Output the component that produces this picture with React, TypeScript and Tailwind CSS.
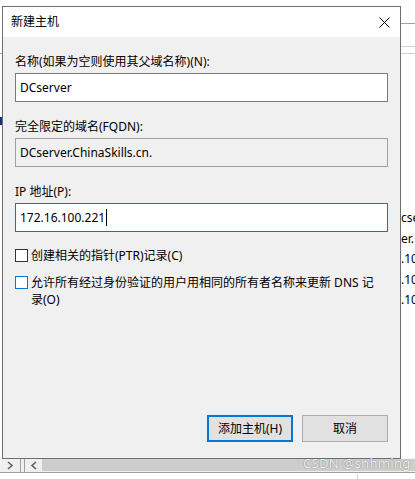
import React from "react";

const font = "font-['Noto_Sans','Noto_Sans_CJK_SC',sans-serif]";

const Field = ({
  label,
  value,
  readOnly,
  focused,
}: {
  label: string;
  value: string;
  readOnly?: boolean;
  focused?: boolean;
}) => (
  <div className="flex flex-col">
    <div className="text-[12px] leading-[16px] text-black">{label}</div>
    <div
      className={`mt-[3px] h-[29px] flex items-center pl-[4px] text-[12px] text-black border ${
        readOnly
          ? "bg-[#f0f0f0] border-[#a0a0a0]"
          : focused
          ? "bg-white border-[#0078d7]"
          : "bg-white border-[#7a7a7a]"
      }`}
    >
      <span>{value}</span>
      {focused && <span className="ml-[1px] w-[1px] h-[17px] bg-black" />}
    </div>
  </div>
);

const Checkbox = ({ hover }: { hover?: boolean }) => (
  <span
    className={`shrink-0 w-[13px] h-[13px] bg-white border ${
      hover ? "border-[#0078d7]" : "border-[#333333]"
    }`}
  />
);

export default function App() {
  return (
    <div className={`relative w-[415px] h-[479px] bg-white overflow-hidden ${font}`}>
      {/* window behind the dialog */}
      <div className="absolute left-[401px] top-[23px] w-[14px] h-[1px] bg-[#a0a0a0]" />
      <div className="absolute left-[401px] top-[46px] w-[14px] h-[1px] bg-[#d0d0d0]" />
      <div className="absolute left-[401px] top-[53px] w-[14px] h-[1px] bg-[#d0d0d0]" />
      <div className="absolute left-0 top-[53px] w-[2px] h-[1px] bg-[#b0b0b0]" />
      <div className="absolute left-0 top-[117px] w-[2px] h-[8px] bg-[#1c2f78]" />
      <div className="absolute left-[401px] top-[208px] flex flex-col text-[12px] leading-[20.5px] text-black whitespace-nowrap">
        <span>cse</span>
        <span>er.</span>
        <span>.10</span>
        <span>.10</span>
        <span>.10</span>
      </div>

      {/* horizontal scrollbar */}
      <div className="absolute left-0 top-[458px] w-[415px] h-[15px] flex items-stretch border-b border-[#a0a0a0] bg-[#f0f0f0]">
        <div className="w-[20px] flex items-center justify-center">
          <svg width="7" height="9" viewBox="0 0 7 9">
            <path d="M1 1 L5 4.5 L1 8" fill="none" stroke="#606060" strokeWidth="1.6" />
          </svg>
        </div>
        <div className="w-[1px] bg-[#a0a0a0]" />
        <div className="w-[3px]" />
        <div className="w-[1px] bg-[#a0a0a0]" />
        <div className="w-[17px] flex items-center justify-center">
          <svg width="7" height="9" viewBox="0 0 7 9">
            <path d="M6 1 L2 4.5 L6 8" fill="none" stroke="#606060" strokeWidth="1.6" />
          </svg>
        </div>
        <div className="flex-1 my-[1px] bg-[#cdcdcd]" />
      </div>
      <div className="absolute left-[357px] top-[474px] w-[1px] h-[5px] bg-[#d0d0d0]" />

      {/* dialog */}
      <div className="absolute left-[2px] top-[6px] w-[399px] h-[453px] border border-[#6f6f6f] flex flex-col bg-[#f0f0f0]">
        <div className="h-[30px] bg-white flex items-center justify-between pl-[8px] pr-[10px]">
          <span className="text-[12px] text-black">新建主机</span>
          <svg width="11" height="11" viewBox="0 0 11 11">
            <path d="M0.5 0.5 L10.5 10.5 M10.5 0.5 L0.5 10.5" stroke="#000" strokeWidth="1" />
          </svg>
        </div>

        <div className="flex-1 flex flex-col px-[12px] pt-[17px] pb-[16px]">
          <Field label="名称(如果为空则使用其父域名称)(N):" value="DCserver" />
          <div className="mt-[17px]">
            <Field label="完全限定的域名(FQDN):" value="DCserver.ChinaSkills.cn." readOnly />
          </div>
          <div className="mt-[17px]">
            <Field label="IP 地址(P):" value="172.16.100.221" focused />
          </div>

          <div className="mt-[15px] flex items-center gap-[3px] text-[12px] leading-[17px] text-black">
            <Checkbox />
            <span>创建相关的指针(PTR)记录(C)</span>
          </div>
          <div className="mt-[10px] flex items-start gap-[3px] text-[12px] leading-[17px] text-black">
            <span className="mt-[2px] flex">
              <Checkbox hover />
            </span>
            <span className="whitespace-nowrap">
              允许所有经过身份验证的用户用相同的所有者名称来更新 DNS 记
              <br />
              录(O)
            </span>
          </div>

          <div className="flex-1" />

          <div className="flex justify-end gap-[9px]">
            <button className="w-[86px] h-[27px] bg-[#e1e1e1] border-2 border-[#0078d7] text-[12px] text-black">
              添加主机(H)
            </button>
            <button className="w-[86px] h-[27px] bg-[#e1e1e1] border border-[#adadad] text-[12px] text-black">
              取消
            </button>
          </div>
        </div>
      </div>

      {/* watermark */}
      <div className="absolute left-[303px] top-[455px] whitespace-nowrap text-[13px] leading-[16px] tracking-[0.3px] text-[#f4f4f4] [text-shadow:0_0_1px_#555]">
        CSDN @snhming
      </div>
    </div>
  );
}
